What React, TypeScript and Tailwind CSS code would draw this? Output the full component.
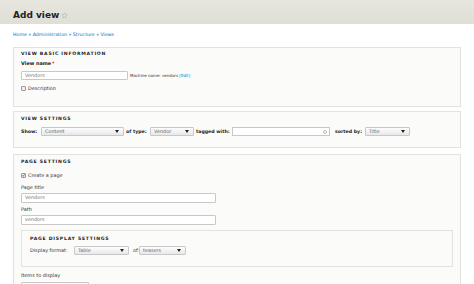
import * as React from 'react';

function Select({ value, w }: { value: string; w: string }) {
  return (
    <div
      className={`${w} flex h-[9px] shrink-0 items-center justify-between rounded-[1px] border border-[#c8c8c8] bg-gradient-to-b from-[#fdfdfd] to-[#e8e8e8] pl-[3px] pr-[4px] text-[4.9px] font-normal text-[#666]`}
    >
      <span>{value}</span>
      <svg width="4" height="3" viewBox="0 0 4 3">
        <path d="M0 0h4L2 3z" fill="#222" />
      </svg>
    </div>
  );
}

function TextInput({ value, w, h = 'h-[10px]' }: { value?: string; w: string; h?: string }) {
  return (
    <div className={`${w} ${h} flex shrink-0 items-center rounded-[1px] border border-[#c8c8c8] bg-white pl-[3px] text-[4.9px] font-normal text-[#777]`}>
      {value}
    </div>
  );
}

function Legend({ children }: { children: React.ReactNode }) {
  return (
    <div className="flex h-[8px] items-center text-[4.6px] font-bold uppercase tracking-[0.75px] text-[#222]">
      {children}
    </div>
  );
}

function Checkbox({ checked }: { checked?: boolean }) {
  return (
    <span className="mr-[2px] flex h-[5px] w-[5px] items-center justify-center rounded-[1px] border border-[#999] bg-[#f0f0f0]">
      {checked && (
        <svg width="5" height="5" viewBox="0 0 5 5">
          <path d="M0.8 2.6l1.2 1.3 2.3-3.2" stroke="#222" strokeWidth="1" fill="none" />
        </svg>
      )}
    </span>
  );
}

export default function App() {
  return (
    <div className="h-[284px] w-[474px] overflow-hidden bg-white font-['DejaVu_Sans',Verdana,sans-serif] text-[#333]">
      <header className="flex h-[24px] items-end bg-gradient-to-b from-[#e6e6df] to-[#dfdfd7] px-[13px] pb-[4px]">
        <h1 className="text-[9px] font-bold leading-none text-[#222]">Add view</h1>
        <svg className="ml-[2px] mb-[1px]" width="7" height="7" viewBox="0 0 24 24">
          <path
            d="M12 2.5l2.9 6.1 6.6.8-4.9 4.6 1.3 6.6L12 17.3l-5.9 3.3 1.3-6.6-4.9-4.6 6.6-.8z"
            fill="none"
            stroke="#b5b5b0"
            strokeWidth="2"
          />
        </svg>
      </header>

      <div className="mt-[8px] flex h-[6px] items-center px-[13px] text-[4.7px] text-[#0074bd]">
        Home » Administration » Structure » Views
      </div>

      <div className="px-[13px]">
        <section className="mt-[9px] h-[60px] border border-[#e3e3de] bg-[#fbfbf9] px-[7px] pt-[2px]">
          <Legend>View basic information</Legend>
          <div className="mt-[2px] flex h-[7px] items-center text-[4.9px] font-bold text-[#222]">
            View name <span className="ml-[1px] text-[#e00]">*</span>
          </div>
          <div className="mt-[4px] flex items-center">
            <TextInput value="Vendors" w="w-[107px]" h="h-[9px]" />
            <span className="ml-[2px] text-[4px] text-[#333]">
              Machine name: vendors <span className="text-[#0074bd]">[Edit]</span>
            </span>
          </div>
          <div className="mt-[5px] flex h-[7px] items-center text-[4.9px]">
            <Checkbox />
            Description
          </div>
        </section>

        <section className="mt-[4px] h-[37px] border border-[#e3e3de] bg-[#fbfbf9] px-[7px] pt-[3px]">
          <Legend>View settings</Legend>
          <div className="mt-[4px] flex items-center text-[4.7px] font-bold text-[#222]">
            <span className="w-[20px]">Show:</span>
            <Select value="Content" w="w-[83px]" />
            <span className="w-[26px] pl-[2px]">of type:</span>
            <Select value="Vendor" w="w-[44px]" />
            <span className="w-[38px] pl-[2px]">tagged with:</span>
            <div className="flex h-[9px] w-[98px] shrink-0 items-center justify-end border border-[#c8c8c8] bg-white pr-[2px]">
              <span className="h-[4px] w-[4px] rounded-full border border-[#bbb]" />
            </div>
            <span className="w-[35px] pl-[5px]">sorted by:</span>
            <Select value="Title" w="w-[45px]" />
          </div>
        </section>

        <section className="mt-[6px] h-[140px] border border-[#e3e3de] bg-[#fbfbf9] px-[7px] pt-[3px]">
          <Legend>Page settings</Legend>
          <div className="mt-[6px] flex h-[7px] items-center text-[4.9px]">
            <Checkbox checked />
            Create a page
          </div>
          <div className="mt-[6px] flex h-[6px] items-center text-[4.9px]">Page title</div>
          <div className="mt-[2px]">
            <TextInput value="Vendors" w="w-[195px]" />
          </div>
          <div className="mt-[4px] flex h-[6px] items-center text-[4.9px]">Path</div>
          <div className="mt-[2px]">
            <TextInput value="vendors" w="w-[195px]" />
          </div>
          <div className="mt-[5px] h-[37px] border border-[#e3e3de] bg-[#fbfbf9] px-[8px] pt-[4px]">
            <Legend>Page display settings</Legend>
            <div className="mt-[3px] flex items-center text-[4.9px]">
              <span className="w-[44px]">Display format:</span>
              <Select value="Table" w="w-[55px]" />
              <span className="w-[10px] pl-[4px]">of:</span>
              <Select value="teasers" w="w-[47px]" />
            </div>
          </div>
          <div className="mt-[6px] flex h-[6px] items-center text-[4.9px]">Items to display</div>
          <div className="mt-[3px]">
            <TextInput w="w-[68px]" />
          </div>
        </section>
      </div>
    </div>
  );
}
